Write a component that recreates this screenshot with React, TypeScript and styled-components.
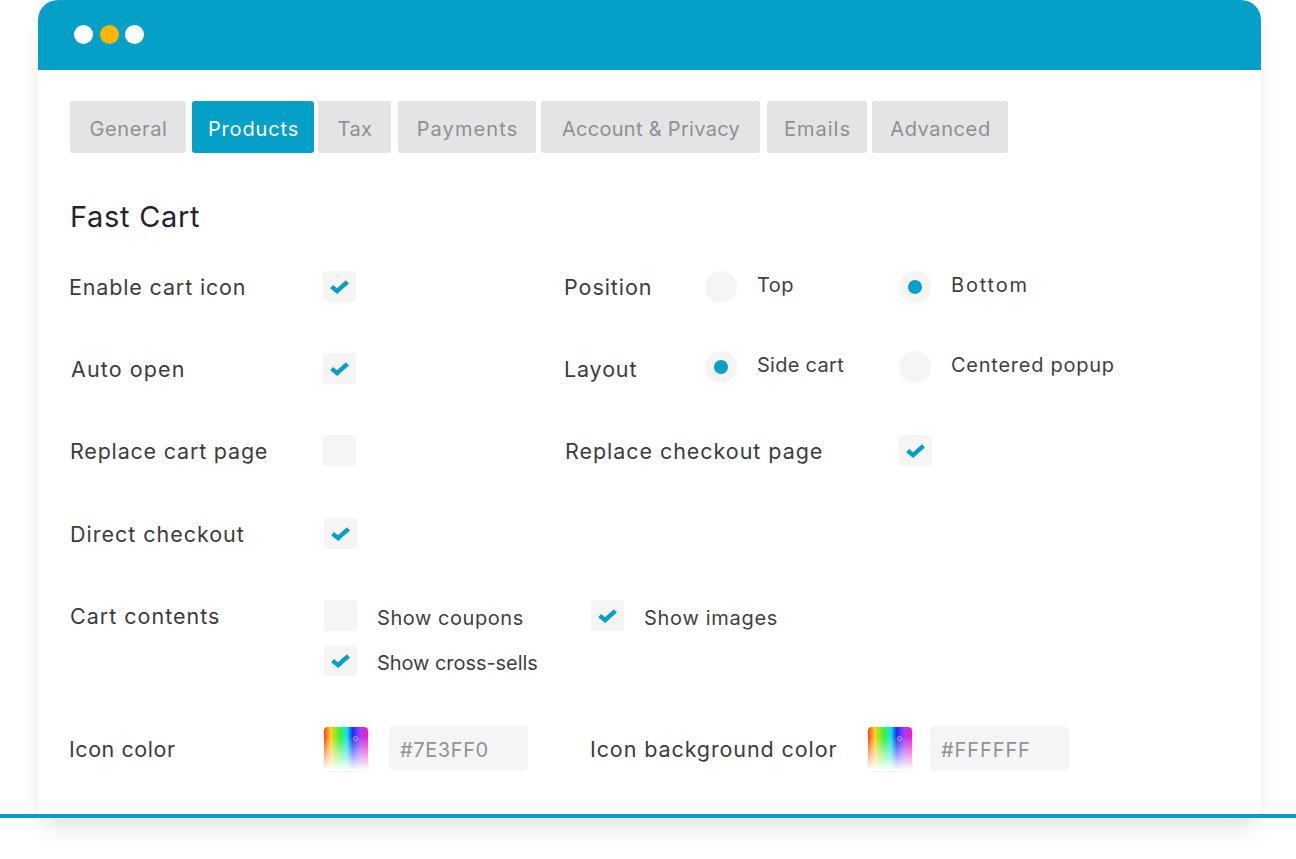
import React from "react";
import styled, { createGlobalStyle } from "styled-components";

const Global = createGlobalStyle`
  html, body { margin: 0; padding: 0; background: #fff; overflow: hidden; }
  body { font-family: "Inter", "Liberation Sans", sans-serif; }
  * { box-sizing: border-box; }
`;

const Page = styled.div`
  position: relative;
  width: 1296px;
  height: 859px;
  padding-left: 38px;
  overflow: hidden;
`;
const Card = styled.div`
  width: 1223px;
  height: 816px;
  background: #fff;
  border-radius: 20px 20px 0 0;
  box-shadow: 0 4px 16px rgba(0, 0, 0, 0.03), 0 18px 24px -6px rgba(0, 0, 0, 0.1);
`;
const TitleBar = styled.div`
  height: 70px;
  background: #04a0c7;
  border-radius: 20px 20px 0 0;
  display: flex;
  align-items: center;
  padding-left: 36px;
  padding-bottom: 2px;
`;
const Dot = styled.span<{ $c: string; $ml: number }>`
  width: 19px;
  height: 19px;
  border-radius: 50%;
  background: ${(p) => p.$c};
  margin-left: ${(p) => p.$ml}px;
`;
const Content = styled.div`
  padding: 31px 0 0 32px;
`;
const Tabs = styled.div`
  display: flex;
`;
const Tab = styled.div<{ $w: number; $ml: number; $ls: number; $active?: boolean }>`
  width: ${(p) => p.$w}px;
  margin-left: ${(p) => p.$ml}px;
  height: 52px;
  padding: 4px 0 0 1px;
  border-radius: 3px;
  display: flex;
  align-items: center;
  justify-content: center;
  font-size: 20px;
  letter-spacing: ${(p) => p.$ls}px;
  background: ${(p) => (p.$active ? "#04a0c7" : "#e4e4e4")};
  color: ${(p) => (p.$active ? "#fff" : "#8d8f99")};
`;
const Title = styled.h2`
  margin: 44px 0 34px;
  height: 40px;
  line-height: 40px;
  font-size: 29px;
  font-weight: 400;
  letter-spacing: 0.7px;
  color: #23242f;
`;
const Row = styled.div<{ $mb?: number }>`
  display: flex;
  align-items: center;
  height: 32px;
  margin-bottom: ${(p) => p.$mb ?? 50}px;
`;
const Left = styled.div`
  display: flex;
  align-items: center;
  width: 494px;
`;
const Label = styled.div<{ $w?: number; $nudge?: number; $ls?: number }>`
  width: ${(p) => p.$w ?? 253}px;
  padding-left: ${(p) => Math.max(p.$nudge ?? 0, 0)}px;
  margin-left: ${(p) => Math.min(p.$nudge ?? 0, 0)}px;
  font-size: 21.5px;
  letter-spacing: ${(p) => p.$ls ?? 0.85}px;
  color: #3c3c3e;
  white-space: nowrap;
  flex: none;
`;
const Box = styled.div`
  width: 33px;
  height: 31px;
  margin-bottom: 1px;
  border-radius: 3px;
  background: #f5f5f5;
  display: flex;
  align-items: center;
  justify-content: center;
  flex: none;
`;
const Option = styled.div<{ $w: number; $lift?: number }>`
  width: ${(p) => p.$w}px;
  margin-bottom: ${(p) => (p.$lift ?? 0) * 2}px;
  display: flex;
  align-items: center;
  flex: none;
`;
const Radio = styled.div`
  width: 32px;
  height: 32px;
  border-radius: 50%;
  background: #f5f5f5;
  display: flex;
  align-items: center;
  justify-content: center;
  flex: none;
`;
const RadioDot = styled.span`
  width: 14px;
  height: 14px;
  border-radius: 50%;
  background: #04a0c7;
`;
const OptionText = styled.span<{ $ls: number; $down: number }>`
  margin-left: 20px;
  font-size: 20px;
  letter-spacing: ${(p) => p.$ls}px;
  color: #3f3f41;
  white-space: nowrap;
  transform: translateY(${(p) => p.$down}px);
`;
const CartBlock = styled.div`
  display: flex;
  margin-bottom: 49px;
`;
const CartOptions = styled.div`
  display: grid;
  grid-template-columns: 267px 267px;
  grid-auto-rows: 32px;
  row-gap: 13px;
`;
const CartLabel = styled(Label)`
  height: 32px;
  line-height: 32px;
`;
const ColorRow = styled.div`
  display: flex;
  align-items: center;
  height: 45px;
`;
const Swatch = styled.div`
  position: relative;
  width: 44px;
  height: 44px;
  border-radius: 4px;
  flex: none;
  background: linear-gradient(to bottom, rgba(255, 255, 255, 0) 22%, #fff 98%),
    linear-gradient(to right, #ff3d1e 0%, #ffd21a 15%, #3cf23c 36%, #10e8e0 52%, #1a2cff 65%, #a040ff 82%, #ff18b0 100%);
  box-shadow: 0 0 0 1px #f4f4f4;
`;
const SwatchPin = styled.span`
  position: absolute;
  left: 29px;
  top: 9px;
  width: 5px;
  height: 5px;
  border-radius: 50%;
  border: 1px solid rgba(255, 255, 255, 0.6);
`;
const HexField = styled.div<{ $ml: number; $ls: number }>`
  width: 139px;
  height: 45px;
  margin-left: ${(p) => p.$ml}px;
  padding: 2px 0 0 11px;
  border-radius: 5px;
  background: #f5f5f5;
  display: flex;
  align-items: center;
  font-size: 20px;
  letter-spacing: ${(p) => p.$ls}px;
  color: #8f9299;
  flex: none;
`;
const BgLabel = styled(Label)`
  margin-left: 62px;
`;
const AccentLine = styled.div`
  position: absolute;
  left: 0;
  right: 0;
  top: 814px;
  height: 4px;
  background: #04a0c7;
`;
const CheckSvg = styled.svg`
  overflow: visible;
  flex: none;
`;

const Check = () => (
  <CheckSvg width="19" height="14" viewBox="0 0 19 14" fill="none">
    <path d="M1.6 6.6 L7.1 11.1 L17.4 1.9" stroke="#04a0c7" strokeWidth="4.4" />
  </CheckSvg>
);

const Toggle = ({ on }: { on?: boolean }) => <Box>{on && <Check />}</Box>;

const RadioOption = ({ w, on, text, ls, lift }: { w: number; on?: boolean; text: string; ls: number; lift?: number }) => (
  <Option $w={w} $lift={lift}>
    <Radio>{on && <RadioDot />}</Radio>
    <OptionText $down={-2} $ls={ls}>{text}</OptionText>
  </Option>
);

const CheckOption = ({ on, text, ls }: { on?: boolean; text: string; ls: number }) => (
  <Option $w={267}>
    <Toggle on={on} />
    <OptionText $down={2} $ls={ls}>{text}</OptionText>
  </Option>
);

const tabs = [
  { t: "General", w: 116, ml: 0, ls: 0.65 },
  { t: "Products", w: 122, ml: 6, ls: 0.85, active: true },
  { t: "Tax", w: 73, ml: 4, ls: 0.45 },
  { t: "Payments", w: 138, ml: 7, ls: 1.1 },
  { t: "Account & Privacy", w: 219, ml: 5, ls: 0.3 },
  { t: "Emails", w: 100, ml: 7, ls: 1 },
  { t: "Advanced", w: 136, ml: 5, ls: 0.6 },
];

export default function App() {
  return (
    <Page>
      <Global />
      <Card>
        <TitleBar>
          <Dot $c="#fff" $ml={0} />
          <Dot $c="#ffb506" $ml={7} />
          <Dot $c="#fff" $ml={6} />
        </TitleBar>
        <Content>
          <Tabs>
            {tabs.map((t) => (
              <Tab key={t.t} $w={t.w} $ml={t.ml} $ls={t.ls} $active={t.active}>
                {t.t}
              </Tab>
            ))}
          </Tabs>
          <Title>Fast Cart</Title>
          <Row>
            <Left>
              <Label $nudge={-1} $w={254}>Enable cart icon</Label>
              <Toggle on />
            </Left>
            <Label $w={141} $ls={0.95}>Position</Label>
            <RadioOption w={194} text="Top" ls={0.4} />
            <RadioOption w={194} on text="Bottom" ls={1.8} />
          </Row>
          <Row>
            <Left>
              <Label $nudge={1} $ls={1.1}>Auto open</Label>
              <Toggle on />
            </Left>
            <Label $w={141}>Layout</Label>
            <RadioOption w={194} on text="Side cart" ls={0.28} lift={2} />
            <RadioOption w={194} text="Centered popup" ls={0.74} lift={2} />
          </Row>
          <Row $mb={51}>
            <Left>
              <Label $ls={0.8}>Replace cart page</Label>
              <Toggle />
            </Left>
            <Label $w={335} $nudge={1} $ls={0.95}>Replace checkout page</Label>
            <Toggle on />
          </Row>
          <Row>
            <Left>
              <Label $w={254} $ls={0.98}>Direct checkout</Label>
              <Toggle on />
            </Left>
          </Row>
          <CartBlock>
            <CartLabel $w={254} $ls={1}>Cart contents</CartLabel>
            <CartOptions>
              <CheckOption text="Show coupons" ls={0.55} />
              <CheckOption on text="Show images" ls={0.7} />
              <CheckOption on text="Show cross-sells" ls={-0.06} />
            </CartOptions>
          </CartBlock>
          <ColorRow>
            <Label $nudge={-1} $w={255} $ls={0.55}>Icon color</Label>
            <Swatch><SwatchPin /></Swatch>
            <HexField $ml={21} $ls={0.6}>#7E3FF0</HexField>
            <BgLabel $w={278} $ls={0.9}>Icon background color</BgLabel>
            <Swatch><SwatchPin /></Swatch>
            <HexField $ml={18} $ls={0.9}>#FFFFFF</HexField>
          </ColorRow>
        </Content>
      </Card>
      <AccentLine />
    </Page>
  );
}
